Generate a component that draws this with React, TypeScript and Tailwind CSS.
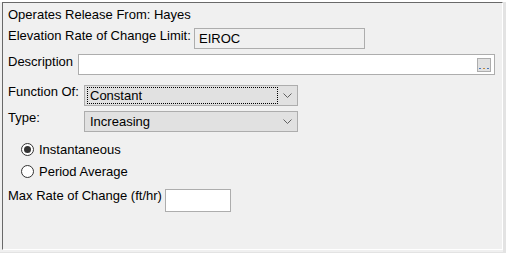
function Chevron() {
  return (
    <svg width="9" height="5" viewBox="0 0 9 5" className="shrink-0">
      <polyline points="0.5,0.5 4.5,4.5 8.5,0.5" fill="none" stroke="#606060" strokeWidth="1" />
    </svg>
  );
}

function Select({ value, focused }: { value: string; focused?: boolean }) {
  return (
    <div className="flex h-[21px] w-[214px] items-center border border-[#adadad] bg-[#e1e1e1] pl-[2px] pr-[5px]">
      <div
        className={
          "flex h-[17px] flex-1 items-center pl-[2px] " +
          (focused ? "border border-dotted border-black" : "border border-transparent")
        }
      >
        {value}
      </div>
      <div className="flex w-[14px] justify-end">
        <Chevron />
      </div>
    </div>
  );
}

function Radio({ label, checked }: { label: string; checked?: boolean }) {
  return (
    <div className="flex h-[15px] items-center pl-[19px]">
      <span className="flex h-[13px] w-[13px] items-center justify-center rounded-full border border-[#333333] bg-white">
        {checked && <span className="h-[7px] w-[7px] rounded-full bg-[#333333]" />}
      </span>
      <span className="ml-[5px]">{label}</span>
    </div>
  );
}

export default function App() {
  return (
    <div
      className="h-[253px] w-[506px] border-b-[3px] border-r-[3px] border-[#e3e3e3] bg-[#f0f0f0] text-[13px] leading-[15px] text-black"
      style={{ fontFamily: '"Liberation Sans", Arial, sans-serif' }}
    >
      <div className="ml-[2px] mt-[2px] h-[248px] w-[501px] border-b border-l border-r border-t border-b-white border-l-[#696969] border-r-white border-t-[#696969]">
        <div className="flex flex-col pl-[5px] pt-[4px]">
          <div className="h-[15px]">Operates Release From: Hayes</div>

          <div className="mt-[6px] flex items-start">
            <div className="w-[186px]">Elevation Rate of Change Limit:</div>
            <div className="h-[21px] w-[171px] border border-[#adadad] bg-[#f0f0f0] pl-[4px] pt-[2px]">EIROC</div>
          </div>

          <div className="mt-[5px] flex items-start">
            <div className="w-[70px]">Description</div>
            <div className="flex h-[21px] w-[417px] items-center justify-end border border-[#adadad] bg-white pr-[3px]">
              <div className="flex h-[14px] w-[14px] items-end justify-center gap-[2px] border border-[#adadad] bg-[#e1e1e1] pb-[2px]">
                <span className="h-[1px] w-[2px] bg-[#4a78b8]" />
                <span className="h-[1px] w-[2px] bg-[#c08a40]" />
                <span className="h-[1px] w-[2px] bg-[#4a78b8]" />
              </div>
            </div>
          </div>

          <div className="mt-[10px] flex items-start">
            <div className="-mt-[1px] w-[76px]">Function Of:</div>
            <Select value="Constant" focused />
          </div>

          <div className="mt-[5px] flex items-start">
            <div className="-mt-[1px] w-[76px]">Type:</div>
            <Select value="Increasing" />
          </div>

          <div className="-ml-[6px] mt-[10px] flex flex-col gap-[7px]">
            <Radio label="Instantaneous" checked />
            <Radio label="Period Average" />
          </div>

          <div className="mt-[10px] flex items-start">
            <div className="-mt-[1px] w-[157px]">Max Rate of Change (ft/hr)</div>
            <div className="h-[23px] w-[66px] border border-[#adadad] bg-white" />
          </div>
        </div>
      </div>
    </div>
  );
}
